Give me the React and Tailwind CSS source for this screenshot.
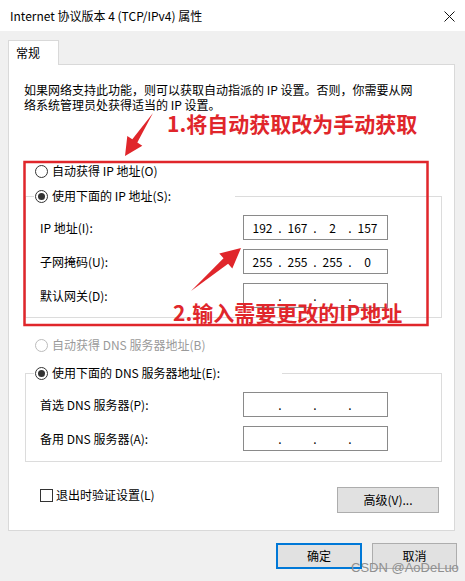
import { Fragment } from 'react';

function Radio({ checked = false, disabled = false }) {
    return (
        <span
            className={`flex h-[13px] w-[13px] shrink-0 items-center justify-center rounded-full border bg-white ${disabled ? 'border-[#bcbcbc]' : 'border-[#333333]'}`}
        >
            {checked && <span className="h-[7px] w-[7px] rounded-full bg-[#333333]" />}
        </span>
    );
}

function IpField({ parts = ['', '', '', ''] }) {
    return (
        <div className="flex h-[25px] w-[145px] items-center border border-[#8a8a8a] bg-white pl-[4px] leading-none">
            {parts.map((p, i) => (
                <Fragment key={i}>
                    <span className="w-[29px] text-center">{p}</span>
                    {i < 3 && <span className="w-[6px] text-center">.</span>}
                </Fragment>
            ))}
        </div>
    );
}

function FieldRow({ label, parts }) {
    return (
        <div className="flex h-[25px] items-center pl-[14px]">
            <span className="w-[203px]">{label}</span>
            <IpField parts={parts} />
        </div>
    );
}

function GroupBox({ legend, legendWidth, children }) {
    return (
        <div className="ml-[16px] w-[417px] border border-[#dcdcdc]">
            <div className={`-mt-[11px] ml-[8px] flex h-[20px] items-center gap-[4px] bg-white pl-[1px] ${legendWidth}`}>
                <Radio checked />
                <span>{legend}</span>
            </div>
            {children}
        </div>
    );
}

export default function App() {
    return (
        <div className="relative h-[581px] w-[465px] overflow-hidden bg-[#f0f0f0] font-['Noto_Sans_CJK_SC','Noto_Sans',sans-serif] text-[12px] text-black">
            {/* title bar */}
            <div className="flex h-[31px] items-center justify-between bg-white pl-[10px] pr-[10px]">
                <span>Internet 协议版本 4 (TCP/IPv4) 属性</span>
                <svg width="11" height="11" viewBox="0 0 11 11" className="mt-px">
                    <path d="M0.5 0.5L10.5 10.5M10.5 0.5L0.5 10.5" stroke="#111" strokeWidth="1" />
                </svg>
            </div>

            <div className="pl-[8px] pt-[9px]">
                <div className="relative z-10 -mb-px h-[25px] w-[51px] border border-b-0 border-[#d9d9d9] bg-white pl-[7px] leading-[23px]">
                    常规
                </div>
                <div className="h-[467px] w-[447px] border border-[#d9d9d9] bg-white">
                    <p className="pl-[15px] pt-[17px] leading-[15px]">
                        如果网络支持此功能，则可以获取自动指派的 IP 设置。否则，你需要从网
                        <br />
                        络系统管理员处获得适当的 IP 设置。
                    </p>

                    <div className="ml-[26px] mt-[49px] flex h-[20px] items-center gap-[4px]">
                        <Radio />
                        <span>自动获得 IP 地址(O)</span>
                    </div>

                    <div className="mt-[15px]">
                        <GroupBox legend="使用下面的 IP 地址(S):" legendWidth="w-[201px]">
                            <div className="mt-[9px] flex flex-col gap-[9px] pb-[9px]">
                                <FieldRow label="IP 地址(I):" parts={['192', '167', '2', '157']} />
                                <FieldRow label="子网掩码(U):" parts={['255', '255', '255', '0']} />
                                <FieldRow label="默认网关(D):" />
                            </div>
                        </GroupBox>
                    </div>

                    <div className="ml-[26px] mt-[17px] flex h-[20px] items-center gap-[4px] text-[#9a9a9a]">
                        <Radio disabled />
                        <span>自动获得 DNS 服务器地址(B)</span>
                    </div>

                    <div className="mt-[18px]">
                        <GroupBox legend="使用下面的 DNS 服务器地址(E):" legendWidth="w-[248px]">
                            <div className="mt-[9px] flex flex-col gap-[9px] pb-[10px]">
                                <FieldRow label="首选 DNS 服务器(P):" />
                                <FieldRow label="备用 DNS 服务器(A):" />
                            </div>
                        </GroupBox>
                    </div>

                    <div className="mt-[23px] flex items-start justify-between pl-[31px] pr-[15px]">
                        <div className="flex h-[20px] items-center gap-[3px]">
                            <span className="h-[13px] w-[13px] border border-[#333333] bg-white" />
                            <span>退出时验证设置(L)</span>
                        </div>
                        <button className="mt-[2px] h-[26px] w-[102px] border border-[#adadad] bg-[#e1e1e1]">
                            高级(V)...
                        </button>
                    </div>
                </div>
            </div>

            <div className="mt-[12px] flex gap-[10px] pl-[276px]">
                <button className="h-[26px] w-[86px] border-2 border-[#0078d7] bg-[#e1e1e1]">确定</button>
                <button className="h-[26px] w-[85px] border border-[#adadad] bg-[#e1e1e1]">取消</button>
            </div>

            {/* red annotations drawn over the screenshot */}
            <svg className="pointer-events-none absolute left-0 top-0" width="465" height="581">
                <rect x="24.5" y="162" width="403" height="163" fill="none" stroke="#e0262b" strokeWidth="2.5" />
                <polygon
                    points="153,113 137.3,142.5 142.3,145.8 125,156 127.3,136 132.3,139.3"
                    fill="#e0262b"
                />
                <polygon
                    points="191,291 228.1,263.7 232.3,268.6 241,248 219.3,253.4 223.5,258.3"
                    fill="#e0262b"
                />
            </svg>
            <div className="absolute left-[167px] top-[109px] text-[21px] font-bold leading-[28px] text-[#e0262b]">
                1.将自动获取改为手动获取
            </div>
            <div className="absolute left-[173px] top-[298px] text-[21px] font-bold leading-[28px] text-[#e0262b]">
                2.输入需要更改的IP地址
            </div>

            <div className="absolute left-[351px] top-[558px] font-['Liberation_Sans',sans-serif] text-[13px] text-[#8f8f8f]">
                CSDN @AoDeLuo
            </div>
        </div>
    );
}
